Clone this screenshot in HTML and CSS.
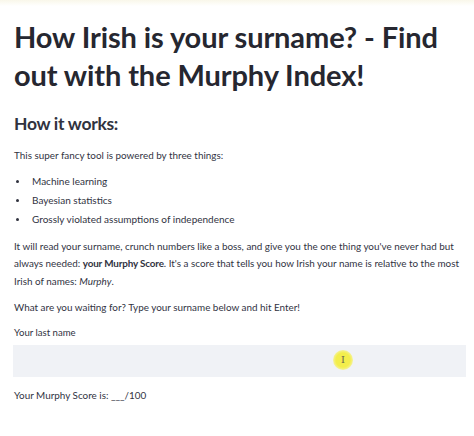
FILE: index.html
```html
<!DOCTYPE html>
<html lang="en">
<head>
<meta charset="utf-8">
<title>Murphy Index</title>
<link rel="stylesheet" href="styles.css">
</head>
<body>
<div class="topband"></div>
<main class="app">
  <h1 class="title">How Irish is your surname? - Find out with the Murphy Index!</h1>
  <h2 class="subtitle">How it works:</h2>
  <p class="para intro">This super fancy tool is powered by three things:</p>
  <ul class="list">
    <li>Machine learning</li>
    <li>Bayesian statistics</li>
    <li>Grossly violated assumptions of independence</li>
  </ul>
  <p class="para explain">It will read your surname, crunch numbers like a boss, and give you the one thing you've never had but always needed: <strong>your Murphy Score</strong>. It's a score that tells you how Irish your name is relative to the most Irish of names: <em>Murphy</em>.</p>
  <p class="para prompt">What are you waiting for? Type your surname below and hit Enter!</p>
  <label class="label" for="name">Your last name</label>
  <div class="field">
    <input id="name" class="input" type="text">
    <span class="cursor"><span class="ibeam">I</span></span>
  </div>
  <p class="para score">Your Murphy Score is: ___/100</p>
</main>
</body>
</html>
```
FILE: styles.css
```css
html, body {
  margin: 0;
  padding: 0;
  background: #ffffff;
}
body {
  font-family: "Source Sans Pro", Lato, "Noto Sans", sans-serif;
  color: #31333f;
  width: 474px;
  height: 436px;
  overflow: hidden;
}
.topband {
  height: 6px;
  background: linear-gradient(#f9f7ea, #ffffff);
}
.app {
  padding: 12px 8px 0 14px;
  display: flex;
  flex-direction: column;
}
.title {
  margin: 0;
  font-size: 29px;
  line-height: 38px;
  font-weight: 700;
  letter-spacing: -0.1px;
  color: #262730;
}
.subtitle {
  margin: 19px 0 0;
  font-size: 17.5px;
  line-height: 22px;
  font-weight: 700;
  letter-spacing: -0.3px;
  color: #31333f;
}
.para {
  margin: 0;
  font-size: 9.9px;
  line-height: 17.5px;
}
.para strong {
  font-weight: 700;
  letter-spacing: -0.15px;
}
.intro {
  margin-top: 11.5px;
}
.list {
  margin: 8px 0 0;
  padding: 0;
  list-style: none;
  font-size: 10px;
  line-height: 19px;
}
.list li {
  display: flex;
  align-items: center;
}
.list li::before {
  content: "";
  width: 3px;
  height: 3px;
  border-radius: 50%;
  background: #31333f;
  margin: 0 13.5px 0 1.5px;
  flex: none;
}
.explain {
  margin-top: 8.5px;
}
.prompt {
  margin-top: 9px;
}
.label {
  margin-top: 10.5px;
  font-size: 9.6px;
  line-height: 12px;
}
.field {
  position: relative;
  margin-top: 5.5px;
  margin-left: -1px;
  height: 32px;
}
.input {
  box-sizing: border-box;
  display: block;
  width: 100%;
  height: 32px;
  border: none;
  background: #f0f2f6;
  outline: none;
  margin: 0;
  padding: 0 8px;
}
.cursor {
  position: absolute;
  left: 320px;
  top: 5px;
  width: 20px;
  height: 20px;
  border-radius: 50%;
  background: radial-gradient(circle, #f3ee4c 50%, rgba(248,244,120,0.6) 75%, rgba(255,255,255,0) 100%);
  display: flex;
  align-items: center;
  justify-content: center;
}
.ibeam {
  font-family: "DejaVu Serif", serif;
  font-size: 10px;
  line-height: 10px;
  color: #6b6a50;
}
.score {
  margin-top: 10.5px;
}
```
